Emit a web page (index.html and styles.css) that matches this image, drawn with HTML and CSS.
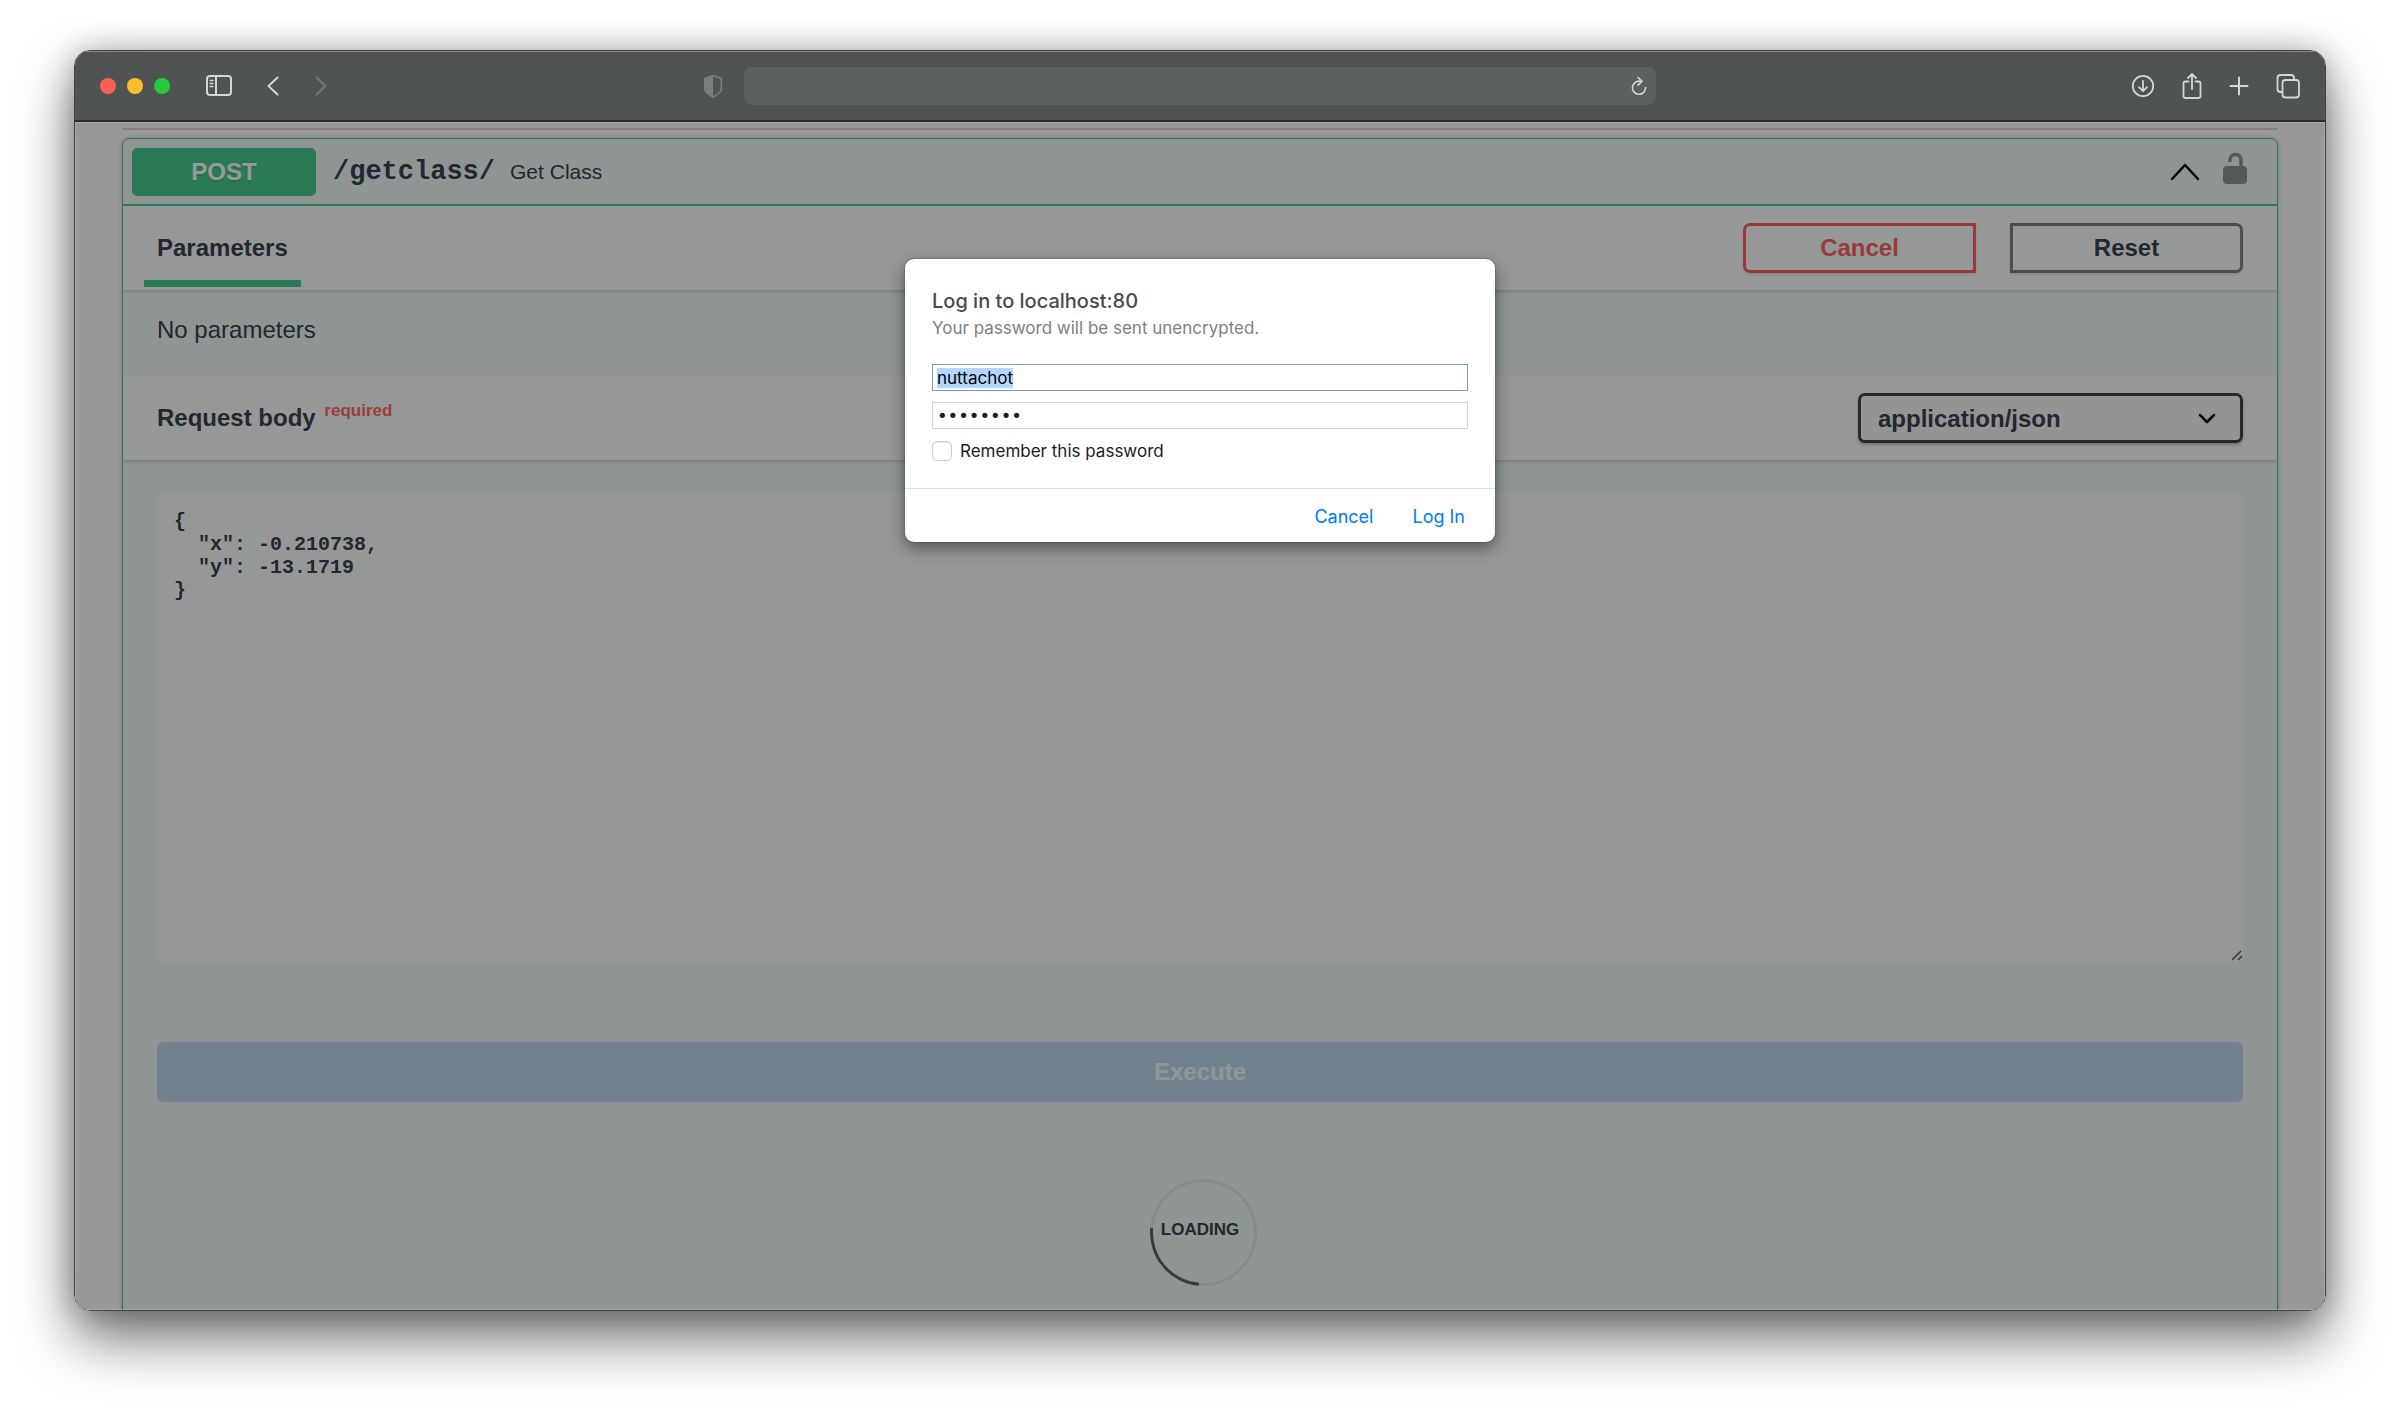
FILE: index.html
```
<!DOCTYPE html>
<html lang="en">

<head>
    <meta charset="utf-8">
    <title>Get Class - API docs</title>
    <link rel="stylesheet" href="styles.css">
</head>

<body>
    <div class="window">
        <div class="toolbar">
            <div class="toolbar-side">
                <div class="traffic-lights">
                    <span class="light red"></span>
                    <span class="light yellow"></span>
                    <span class="light green"></span>
                </div>
                <button class="tool" type="button" aria-label="Sidebar">
                    <svg width="28" height="22" viewBox="0 0 28 22" fill="none" stroke="currentColor" stroke-width="2">
                        <rect x="2" y="1" width="24" height="19" rx="3" />
                        <path d="M11 1v19" />
                        <path d="M4.500 5.500h4M4.500 8.500h4M4.500 11.500h4" stroke-width="1.500" />
                    </svg>
                </button>
                <button class="tool back" type="button" aria-label="Back">
                    <svg width="12" height="20" viewBox="0 0 12 20" fill="none" stroke="currentColor" stroke-width="2" stroke-linecap="round" stroke-linejoin="round">
                        <path d="M10.500 1.500L1.500 10l9 8.500" />
                    </svg>
                </button>
                <button class="tool forward" type="button" aria-label="Forward">
                    <svg width="12" height="20" viewBox="0 0 12 20" fill="none" stroke="currentColor" stroke-width="2" stroke-linecap="round" stroke-linejoin="round">
                        <path d="M1.500 1.500l9 8.500-9 8.500" />
                    </svg>
                </button>
                <svg class="shield" width="20" height="24" viewBox="0 0 20 24">
                    <path d="M10 1.500L18.300 4.500v11.500q-1 3-8.300 7Q2.700 19 1.700 16V4.500z" fill="none" stroke="currentColor" stroke-width="1.600" stroke-linejoin="round" />
                    <path d="M10 1.500v21.500Q2.700 19 1.700 16V4.500z" fill="currentColor" />
                </svg>
            </div>
            <div class="address">
                <input class="address-input" type="text" aria-label="Address">
                <button class="tool" type="button" aria-label="Reload">
                    <svg width="18" height="20" viewBox="0 0 18 20" fill="none" stroke="currentColor" stroke-width="1.600" stroke-linecap="round" stroke-linejoin="round">
                        <path d="M10 5.200A6.600 6.600 0 1 0 15.600 11.500" />
                        <path d="M8 1.500l4 3.800-4 3.800" />
                    </svg>
                </button>
            </div>
            <div class="toolbar-side end">
                <button class="tool" type="button" aria-label="Downloads">
                    <svg width="24" height="26" viewBox="0 0 24 26" fill="none" stroke="currentColor" stroke-width="1.800" stroke-linecap="round" stroke-linejoin="round">
                        <circle cx="12" cy="13" r="10.200" />
                        <path d="M12 8v10M8 14.200l4 4 4-4" />
                    </svg>
                </button>
                <button class="tool" type="button" aria-label="Share">
                    <svg width="20" height="26" viewBox="0 0 20 26" fill="none" stroke="currentColor" stroke-width="1.800" stroke-linecap="round" stroke-linejoin="round">
                        <path d="M6.500 8.500H3.500q-2 0-2 2V23q0 2 2 2h13q2 0 2-2V10.500q0-2-2-2h-3M10 16V1.500M6 5l4-4 4 4" />
                    </svg>
                </button>
                <button class="tool" type="button" aria-label="New tab">
                    <svg width="20" height="26" viewBox="0 0 20 26" fill="none" stroke="currentColor" stroke-width="2" stroke-linecap="round">
                        <path d="M10 4.500v17M1.500 13h17" />
                    </svg>
                </button>
                <button class="tool" type="button" aria-label="Show tabs">
                    <svg width="24" height="26" viewBox="0 0 24 26" fill="none" stroke="currentColor" stroke-width="1.800" stroke-linejoin="round">
                        <rect x="6.500" y="7" width="16.500" height="17.500" rx="3" />
                        <path d="M6.500 19H4.500q-3 0-3-3V5q0-3 3-3H15q3 0 3 3v2" />
                    </svg>
                </button>
            </div>
        </div>

        <div class="content">
            <div class="tag-section">
                <div class="opblock">
                    <div class="opblock-summary">
                        <span class="method">POST</span>
                        <a class="path" href="#getclass">/getclass/</a>
                        <span class="description">Get Class</span>
                        <button class="summary-control" type="button" aria-label="Collapse">
                            <svg width="30" height="18" viewBox="0 0 30 18" fill="none" stroke="#000" stroke-width="2.500" stroke-linecap="round" stroke-linejoin="round">
                                <path d="M2 16L15 2l13 14" />
                            </svg>
                        </button>
                        <button class="summary-control lock" type="button" aria-label="Authorize">
                            <svg width="26" height="34" viewBox="0 0 26 34">
                                <path d="M8 10V8a5.500 5.500 0 0 1 11 0V15" fill="none" stroke="#000" stroke-width="3.500" />
                                <rect x="1" y="14" width="24" height="18" rx="4" />
                            </svg>
                        </button>
                    </div>

                    <div class="section-header">
                        <h4 class="tab">Parameters</h4>
                        <div class="btn-group">
                            <button class="btn cancel" type="button">Cancel</button>
                            <button class="btn reset" type="button">Reset</button>
                        </div>
                    </div>
                    <div class="no-params">
                        <p>No parameters</p>
                    </div>

                    <div class="section-header request">
                        <h4 class="request-title">Request body <span class="required">required</span></h4>
                        <div class="select-wrap">
                            <select class="content-type" aria-label="Content type">
                                <option>application/json</option>
                            </select>
                            <svg class="arrow" width="18" height="12" viewBox="0 0 18 12" fill="none" stroke="#000" stroke-width="2.500" stroke-linecap="round" stroke-linejoin="round">
                                <path d="M2 2l7 7 7-7" />
                            </svg>
                        </div>
                    </div>

                    <div class="body-param">
                        <textarea class="body-text" rows="19" aria-label="Request body" spellcheck="false">{
  "x": -0.210738,
  "y": -13.1719
}</textarea>
                        <svg class="grip" width="12" height="12" viewBox="0 0 12 12" fill="none" stroke="#555" stroke-width="1.500">
                            <path d="M1 11l9-9M7 11l4-4" />
                        </svg>
                    </div>

                    <div class="execute-wrapper">
                        <button class="execute" type="button" disabled>Execute</button>
                    </div>

                    <div class="loading">
                        <div class="spinner"></div>
                        <span class="loading-text">LOADING</span>
                    </div>
                </div>
            </div>

            <div class="backdrop">
                <form class="dialog">
                    <div class="dialog-body">
                        <h2 class="dialog-title">Log in to localhost:80</h2>
                        <p class="dialog-note">Your password will be sent unencrypted.</p>
                        <input class="field" id="username" type="text" value="nuttachot" aria-label="User name" spellcheck="false">
                        <input class="field password" id="password" type="password" value="password" aria-label="Password">
                        <label class="remember" for="remember">
                            <input id="remember" type="checkbox">
                            Remember this password
                        </label>
                    </div>
                    <div class="dialog-actions">
                        <button class="action" type="button">Cancel</button>
                        <button class="action login" type="submit">Log In</button>
                    </div>
                </form>
            </div>
        </div>
    </div>
    <script>
        var username = document.getElementById('username');
        username.focus();
        username.select();
    </script>
</body>

</html>
```

FILE: styles.css
```
* {
    box-sizing: border-box;
}

body {
    margin: 0;
    height: 100vh;
    display: flex;
    padding: 50px 74px 98px;
    background-color: #ffffff;
    font-family: "Liberation Sans", Arial, sans-serif;
    color: #3b4151;
    overflow: hidden;
}

button,
input,
select,
textarea {
    font-family: inherit;
    margin: 0;
}

h2,
h4,
p {
    margin: 0;
}

.window {
    flex: 1;
    display: flex;
    flex-direction: column;
    border: 1px solid #444646;
    border-radius: 16px;
    overflow: hidden;
    box-shadow: 0 28px 56px rgba(0, 0, 0, 0.55), 0 0 30px rgba(0, 0, 0, 0.25);
}

/* browser toolbar */

.toolbar {
    height: 71px;
    flex: none;
    display: flex;
    align-items: center;
    padding: 0 25px;
    background-color: #4f5351;
    border-bottom: 2px solid #2a2c2b;
    box-shadow: inset 0 1px 0 #858786;
}

.toolbar-side {
    flex: 1;
    display: flex;
    align-items: center;
}

.toolbar-side.end {
    justify-content: flex-end;
    gap: 27px;
}

.traffic-lights {
    display: flex;
    gap: 11px;
    margin-right: 35px;
}

.light {
    width: 16px;
    height: 16px;
    border-radius: 50%;
}

.red {
    background-color: #ff5f57;
}

.yellow {
    background-color: #febc2e;
}

.green {
    background-color: #28c840;
}

.tool {
    display: flex;
    padding: 0;
    border: none;
    background: none;
    color: #d5d6d6;
}

.back {
    margin-left: 34px;
}

.forward {
    margin-left: 36px;
    color: #747776;
}

.shield {
    margin-left: auto;
    margin-right: 21px;
    color: #7b7e7d;
}

.address {
    width: 912px;
    height: 38px;
    display: flex;
    align-items: center;
    padding: 0 8px;
    border-radius: 8px;
    background-color: #5c605e;
}

.address-input {
    flex: 1;
    border: none;
    background: none;
    color: #ffffff;
    font-size: 20px;
}

/* page */

.content {
    flex: 1;
    min-height: 0;
    position: relative;
    overflow: hidden;
    padding: 6px 47px 0;
    background-color: #fefefe;
}

.tag-section {
    border-top: 2px solid #d5d5d8;
    padding-top: 8px;
}

.opblock {
    height: 1300px;
    border: 1px solid #49cc90;
    border-radius: 7px;
    background-color: #edf9f4;
    box-shadow: 0 0 5px rgba(0, 0, 0, 0.2);
}

.opblock-summary {
    display: flex;
    align-items: center;
    height: 67px;
    padding: 1px 29px 0 9px;
    border-bottom: 2px solid #49cc90;
}

.method {
    width: 184px;
    border-radius: 5px;
    background-color: #49cc90;
    color: #ffffff;
    font-size: 24px;
    font-weight: bold;
    line-height: 48px;
    text-align: center;
    text-shadow: 0 2px 0 rgba(0, 0, 0, 0.1);
}

.path {
    margin: 0 15px 0 17px;
    color: #3b4151;
    font-family: "Liberation Mono", monospace;
    font-size: 27px;
    font-weight: bold;
    text-decoration: none;
}

.description {
    flex: 1;
    font-size: 21px;
}

.summary-control {
    display: flex;
    padding: 0;
    border: none;
    background: none;
}

.lock {
    margin-left: 22px;
    padding-bottom: 6px;
    opacity: 0.4;
}

.section-header {
    display: flex;
    align-items: center;
    justify-content: space-between;
    height: 84px;
    padding: 0 34px 0 21px;
    background-color: #fbfefd;
    box-shadow: 0 2px 3px rgba(0, 0, 0, 0.15);
}

.tab {
    align-self: stretch;
    display: flex;
    align-items: center;
    margin-bottom: 3px;
    padding: 10px 13px 0;
    border-bottom: 7px solid #49cc90;
    font-size: 24px;
}

.btn-group {
    display: flex;
    gap: 34px;
}

.btn {
    width: 233px;
    height: 50px;
    border: 3px solid #808080;
    background: none;
    color: #3b4151;
    font-size: 24px;
    font-weight: bold;
    box-shadow: 0 2px 3px rgba(0, 0, 0, 0.1);
}

.cancel {
    border-color: #ff6060;
    border-radius: 7px 0 0 7px;
    color: #ff6060;
}

.reset {
    border-radius: 0 7px 7px 0;
}

.no-params {
    height: 86px;
    padding: 25px 34px;
    font-size: 24px;
    line-height: 30px;
}

.request {
    padding-left: 34px;
}

.request-title {
    font-size: 24px;
    line-height: 28px;
}

.required {
    margin-left: 2px;
    color: #ff6b66;
    font-size: 17px;
    line-height: 10px;
    vertical-align: 10px;
}

.select-wrap {
    position: relative;
    width: 385px;
}

.content-type {
    display: block;
    width: 100%;
    height: 50px;
    padding: 0 17px;
    border: 3px solid #41444e;
    border-radius: 7px;
    appearance: none;
    background-color: #f7f7f7;
    box-shadow: 0 2px 3px rgba(0, 0, 0, 0.25);
    color: #3b4151;
    font-size: 24px;
    font-weight: bold;
}

.arrow {
    position: absolute;
    right: 27px;
    top: 20px;
}

.body-param {
    position: relative;
    padding: 33px 34px;
}

.body-text {
    display: block;
    width: 100%;
    padding: 17px 17px 15px;
    border: none;
    border-radius: 7px;
    resize: none;
    background-color: #fbfefd;
    color: #3b4151;
    font-family: "Liberation Mono", monospace;
    font-size: 20px;
    font-weight: bold;
    line-height: 23px;
}

.grip {
    position: absolute;
    right: 34px;
    bottom: 34px;
}

.execute-wrapper {
    padding: 47px 34px 0;
}

.execute {
    width: 100%;
    height: 60px;
    border: none;
    border-radius: 7px;
    background-color: #4990e2;
    color: #ffffff;
    font-size: 24px;
    font-weight: bold;
    opacity: 0.3;
}

.loading {
    display: grid;
    place-items: center;
    padding-top: 77px;
}

.spinner,
.loading-text {
    grid-area: 1 / 1;
}

.spinner {
    width: 107px;
    height: 107px;
    margin-left: 6px;
    border: 3px solid rgba(85, 85, 85, 0.1);
    border-top-color: rgba(0, 0, 0, 0.6);
    border-radius: 50%;
    transform: rotate(-130deg);
}

.loading-text {
    padding-bottom: 6px;
    font-size: 17px;
    font-weight: bold;
}

/* login dialog */

.backdrop {
    position: absolute;
    inset: 0;
    display: flex;
    justify-content: center;
    align-items: flex-start;
    padding-top: 137px;
    background-color: rgba(0, 0, 0, 0.4);
    box-shadow: inset 0 0 0 1px rgba(255, 255, 255, 0.15);
}

.dialog {
    width: 590px;
    border-radius: 9px;
    background-color: #ffffff;
    box-shadow: 0 6px 16px rgba(0, 0, 0, 0.45), 0 0 2px rgba(0, 0, 0, 0.4);
    color: #1d1d1d;
    font-family: Inter, sans-serif;
    font-size: 17px;
}

.dialog-body {
    display: flex;
    flex-direction: column;
    padding: 28px 27px 26px;
}

.dialog-title {
    color: #4a4a4a;
    font-size: 20px;
    font-weight: 500;
    line-height: 28px;
}

.dialog-note {
    margin-bottom: 22px;
    color: #808080;
    line-height: 27px;
}

.field {
    height: 27px;
    margin-bottom: 11px;
    padding: 0 4px;
    border: 1px solid #d4d4d4;
    background-color: #ffffff;
    color: #1d1d1d;
    font-size: 17px;
    outline: none;
}

.field:focus {
    border-color: #7a9ad6;
}

.field::selection {
    background-color: #b3d7ff;
    color: #000000;
}

.password {
    font-family: "DejaVu Sans", sans-serif;
    font-size: 18px;
}

.remember {
    display: flex;
    align-items: center;
    gap: 8px;
    line-height: 22px;
}

.remember input {
    width: 20px;
    height: 20px;
    appearance: none;
    border: 1px solid #cccccc;
    border-radius: 5px;
    background-color: #ffffff;
    box-shadow: inset 0 1px 1px rgba(0, 0, 0, 0.1);
}

.dialog-actions {
    display: flex;
    justify-content: flex-end;
    gap: 39px;
    padding: 14px 30px 12px;
    border-top: 1px solid #dcdcdc;
}

.action {
    padding: 0;
    border: none;
    background: none;
    color: #007aff;
    font-size: 18px;
    line-height: 27px;
}
```
